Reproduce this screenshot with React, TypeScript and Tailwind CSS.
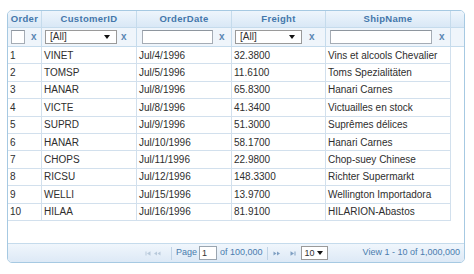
import React from "react";

const cols = [34, 95, 95, 94, 125];
const headers = ["Order", "CustomerID", "OrderDate", "Freight", "ShipName"];
const rows: string[][] = [
  ["1", "VINET", "Jul/4/1996", "32.3800", "Vins et alcools Chevalier"],
  ["2", "TOMSP", "Jul/5/1996", "11.6100", "Toms Spezialitäten"],
  ["3", "HANAR", "Jul/8/1996", "65.8300", "Hanari Carnes"],
  ["4", "VICTE", "Jul/8/1996", "41.3400", "Victuailles en stock"],
  ["5", "SUPRD", "Jul/9/1996", "51.3000", "Suprêmes délices"],
  ["6", "HANAR", "Jul/10/1996", "58.1700", "Hanari Carnes"],
  ["7", "CHOPS", "Jul/11/1996", "22.9800", "Chop-suey Chinese"],
  ["8", "RICSU", "Jul/12/1996", "148.3300", "Richter Supermarkt"],
  ["9", "WELLI", "Jul/15/1996", "13.9700", "Wellington Importadora"],
  ["10", "HILAA", "Jul/16/1996", "81.9100", "HILARION-Abastos"],
];

const font = { fontFamily: '"Liberation Sans", Arial, sans-serif' };

function Down({ color }: { color: string }) {
  return (
    <svg width="6" height="4" viewBox="0 0 6 4">
      <path d="M0 0 L6 0 L3 4 Z" fill={color} />
    </svg>
  );
}

function Sel({ w, text }: { w: number; text: string }) {
  return (
    <div
      className="h-[14px] bg-white border border-[#9a9a9a] flex items-center pl-[4px] pr-[6px] text-[10px] text-[#333]"
      style={{ width: w }}
    >
      <span className="flex-1 leading-none">{text}</span>
      <Down color="#111" />
    </div>
  );
}

function Inp({ w }: { w: number }) {
  return (
    <div
      className="h-[14px] bg-white border border-[#a5acb5] border-t-[#8e969f]"
      style={{ width: w }}
    />
  );
}

function X({ ml }: { ml: number }) {
  return (
    <span className="text-[10px] font-bold text-[#5b86b3] leading-none" style={{ marginLeft: ml }}>
      x
    </span>
  );
}

function PagerIcon({ kind, color }: { kind: "first" | "prev" | "next" | "end"; color: string }) {
  return (
    <svg width="7" height="5" viewBox="0 0 7 5">
      {kind === "first" && (
        <>
          <rect x="0.5" y="0.5" width="1" height="4" fill={color} />
          <path d="M2 2.5 L5.5 0.3 L5.5 4.7 Z" fill={color} />
        </>
      )}
      {kind === "prev" && (
        <>
          <path d="M0 2.5 L3 0.5 L3 4.5 Z" fill={color} />
          <path d="M3.5 2.5 L6.5 0.5 L6.5 4.5 Z" fill={color} />
        </>
      )}
      {kind === "next" && (
        <>
          <path d="M0.5 0.5 L3.5 2.5 L0.5 4.5 Z" fill={color} />
          <path d="M4 0.5 L7 2.5 L4 4.5 Z" fill={color} />
        </>
      )}
      {kind === "end" && (
        <>
          <path d="M1.5 0.3 L5 2.5 L1.5 4.7 Z" fill={color} />
          <rect x="5.5" y="0.5" width="1" height="4" fill={color} />
        </>
      )}
    </svg>
  );
}

export default function App() {
  return (
    <div className="w-[474px] h-[274px] bg-white pl-[7px] pt-[10px]" style={font}>
      <div className="w-[458px] border border-[#a6c9e2] rounded-[5px] bg-[#fcfdfd] overflow-hidden">
        {/* header */}
        <div className="flex h-[17px] border-b border-[#c5dbec] bg-gradient-to-b from-[#eef5fc] to-[#d9e8f6]">
          {headers.map((h, i) => (
            <div
              key={h}
              className="h-full flex items-center justify-center border-r border-[#c5dbec] text-[9.5px] font-bold text-[#4477ab] tracking-[0.3px]"
              style={{ width: cols[i] }}
            >
              {h}
            </div>
          ))}
          <div className="flex-1" />
        </div>
        {/* filter row */}
        <div className="flex h-[19px] border-b border-[#c5dbec] bg-[#eff5fb]">
          <div className="h-full flex items-center border-r border-[#c5dbec] pl-[3px]" style={{ width: cols[0] }}>
            <Inp w={14} />
            <X ml={6} />
          </div>
          <div className="h-full flex items-center border-r border-[#c5dbec] pl-[3px]" style={{ width: cols[1] }}>
            <Sel w={72} text="[All]" />
            <X ml={4} />
          </div>
          <div className="h-full flex items-center border-r border-[#c5dbec] pl-[5px]" style={{ width: cols[2] }}>
            <Inp w={71} />
            <X ml={6} />
          </div>
          <div className="h-full flex items-center border-r border-[#c5dbec] pl-[3px]" style={{ width: cols[3] }}>
            <Sel w={67} text="[All]" />
            <X ml={7} />
          </div>
          <div className="h-full flex items-center border-r border-[#c5dbec] pl-[4px]" style={{ width: cols[4] }}>
            <Inp w={102} />
            <X ml={7} />
          </div>
          <div className="flex-1" />
        </div>
        {/* body */}
        <div className="h-[196px] bg-white">
          {rows.map((r, ri) => (
            <div key={ri} className="flex h-[17.4px]">
              {r.map((c, ci) => (
                <div
                  key={ci}
                  className="h-full flex items-center border-r border-b border-[#d2e0ed] pl-[2px] text-[10px] text-[#2e2e2e] whitespace-nowrap overflow-hidden"
                  style={{ width: cols[ci] }}
                >
                  {c}
                </div>
              ))}
            </div>
          ))}
        </div>
        {/* pager */}
        <div className="flex items-center h-[19px] border-t border-[#c5dbec] bg-gradient-to-b from-[#f0f6fc] to-[#dde9f6] text-[9px] text-[#4a7cae]">
          <div className="flex items-center pl-[137px]">
            <PagerIcon kind="first" color="#b9cadb" />
            <span className="w-[2px]" />
            <PagerIcon kind="prev" color="#b9cadb" />
            <span className="ml-[10px] w-px h-[13px] bg-[#c0d3e6]" />
            <span className="ml-[4px]">Page</span>
            <div className="ml-[2px] w-[18px] h-[14px] bg-white border border-[#9aa5b0] text-[9px] text-[#333] pl-[2px] leading-[12px]">
              1
            </div>
            <span className="ml-[3px]">of 100,000</span>
            <span className="ml-[4px] w-px h-[13px] bg-[#c0d3e6]" />
            <span className="ml-[5px] flex">
              <PagerIcon kind="next" color="#7f9fc2" />
            </span>
            <span className="ml-[9px] flex">
              <PagerIcon kind="end" color="#7f9fc2" />
            </span>
            <div className="ml-[5px] w-[27px] h-[14px] bg-white border border-[#9a9a9a] flex items-center pl-[3px] pr-[4px] text-[9px] text-[#333]">
              <span className="flex-1 leading-none">10</span>
              <Down color="#111" />
            </div>
          </div>
          <div className="ml-auto pr-[4px] whitespace-nowrap">View 1 - 10 of 1,000,000</div>
        </div>
      </div>
    </div>
  );
}
